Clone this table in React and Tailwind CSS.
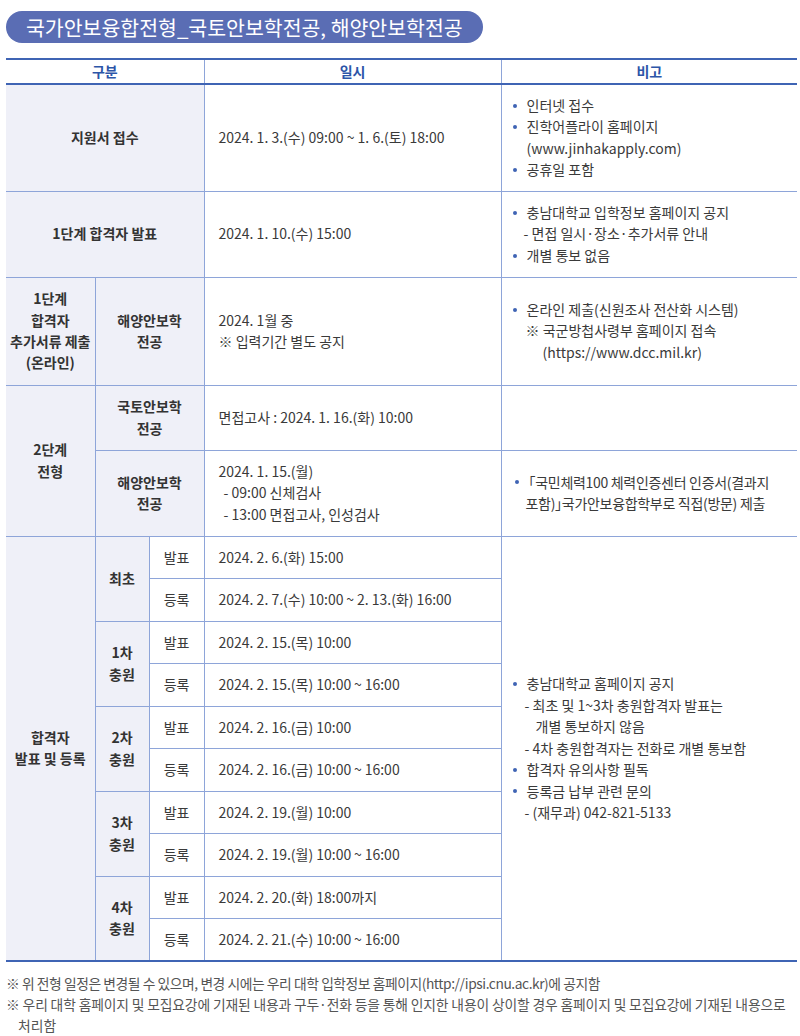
import React from "react";

const B = "border border-[#8ea5d9]";
const THICK_B = "border-b-2 border-b-[#3f64b4]";
const LABEL = "bg-[#eff0f8] text-center font-bold text-[#333]";

function Bullet({ children }) {
  return (
    <div className="flex">
      <span className="w-[14px] flex-none flex items-center">
        <span className="block w-[4px] h-[4px] rounded-full bg-[#3f64b4]" />
      </span>
      <span>{children}</span>
    </div>
  );
}

const Sub = ({ children, pl = "pl-[10px]" }) => <div className={pl}>{children}</div>;

const rounds = [
  ["최초", "2024. 2. 6.(화) 15:00", "2024. 2. 7.(수) 10:00\u2009~\u20092. 13.(화) 16:00"],
  ["1차\n충원", "2024. 2. 15.(목) 10:00", "2024. 2. 15.(목) 10:00\u2009~\u200916:00"],
  ["2차\n충원", "2024. 2. 16.(금) 10:00", "2024. 2. 16.(금) 10:00\u2009~\u200916:00"],
  ["3차\n충원", "2024. 2. 19.(월) 10:00", "2024. 2. 19.(월) 10:00\u2009~\u200916:00"],
  ["4차\n충원", "2024. 2. 20.(화) 18:00까지", "2024. 2. 21.(수) 10:00\u2009~\u200916:00"],
];

export default function App() {
  return (
    <div className="w-[800px] min-h-[1036px] bg-white pt-[11px] font-['Noto_Sans_CJK_KR','Noto_Sans',sans-serif] text-[#3a3a3a]">
      <div className="ml-[6px] w-[477px] h-[32px] rounded-full bg-[#5a6db4] text-white text-[20.5px] leading-[32px] pl-[20px] whitespace-nowrap">
        국가안보융합전형_국토안보학전공, 해양안보학전공
      </div>

      <table className="mt-[15px] ml-[6px] w-[791px] table-fixed border-collapse text-[14px] leading-[21.5px]">
        <colgroup>
          <col className="w-[89px]" />
          <col className="w-[54px]" />
          <col className="w-[55px]" />
          <col className="w-[297px]" />
          <col className="w-[296px]" />
        </colgroup>
        <thead>
          <tr className="h-[25px]">
            {[
              ["구분", 3, "border-l-0"],
              ["일시", 1, ""],
              ["비고", 1, "border-r-0"],
            ].map(([t, cs, extra]) => (
              <th
                key={t}
                colSpan={cs}
                className={`${B} ${extra} border-t-2 border-b-2 border-t-[#3f64b4] border-b-[#3f64b4] text-[14px] font-bold text-[#2c55a8] p-0`}
              >
                {t}
              </th>
            ))}
          </tr>
        </thead>
        <tbody>
          <tr className="h-[107px]">
            <td colSpan={3} className={`${B} border-l-0 ${LABEL}`}>지원서 접수</td>
            <td className={`${B} pl-[14px]`}>2024. 1. 3.(수) 09:00 ~ 1. 6.(토) 18:00</td>
            <td className={`${B} border-r-0 pl-[11px]`}>
              <Bullet>인터넷 접수</Bullet>
              <Bullet>진학어플라이 홈페이지</Bullet>
              <Sub pl="pl-[14px]">(www.jinhakapply.com)</Sub>
              <Bullet>공휴일 포함</Bullet>
            </td>
          </tr>
          <tr className="h-[86px]">
            <td colSpan={3} className={`${B} border-l-0 ${LABEL}`}>1단계 합격자 발표</td>
            <td className={`${B} pl-[14px]`}>2024. 1. 10.(수) 15:00</td>
            <td className={`${B} border-r-0 pl-[11px]`}>
              <Bullet>충남대학교 입학정보 홈페이지 공지</Bullet>
              <Sub pl="pl-[11px]">- 면접 일시·장소·추가서류 안내</Sub>
              <Bullet>개별 통보 없음</Bullet>
            </td>
          </tr>
          <tr className="h-[108px]">
            <td className={`${B} border-l-0 ${LABEL} leading-[21.3px]`}>
              1단계
              <br />
              합격자
              <br />
              <span className="whitespace-nowrap">추가서류 제출</span>
              <br />
              (온라인)
            </td>
            <td colSpan={2} className={`${B} ${LABEL}`}>
              해양안보학
              <br />
              전공
            </td>
            <td className={`${B} pl-[14px]`}>
              2024. 1월 중
              <br />※ 입력기간 별도 공지
            </td>
            <td className={`${B} border-r-0 pl-[11px]`}>
              <Bullet>온라인 제출(신원조사 전산화 시스템)</Bullet>
              <Sub pl="pl-[13px]">※ 국군방첩사령부 홈페이지 접속</Sub>
              <Sub pl="pl-[30px]">(https://www.dcc.mil.kr)</Sub>
            </td>
          </tr>
          <tr className="h-[65px]">
            <td rowSpan={2} className={`${B} border-l-0 ${LABEL}`}>
              2단계
              <br />
              전형
            </td>
            <td colSpan={2} className={`${B} ${LABEL}`}>
              국토안보학
              <br />
              전공
            </td>
            <td className={`${B} pl-[14px]`}>면접고사 : 2024. 1. 16.(화) 10:00</td>
            <td className={`${B} border-r-0`}></td>
          </tr>
          <tr className="h-[86px]">
            <td colSpan={2} className={`${B} ${LABEL}`}>
              해양안보학
              <br />
              전공
            </td>
            <td className={`${B} pl-[14px]`}>
              2024. 1. 15.(월)
              <br />
              <span className="pl-[5px]">- 09:00 신체검사</span>
              <br />
              <span className="pl-[5px]">- 13:00 면접고사, 인성검사</span>
            </td>
            <td className={`${B} border-r-0 pl-[13px] tracking-[-0.3px]`}>
              <Bullet>｢국민체력100 체력인증센터 인증서(결과지</Bullet>
              <Sub pl="pl-[11px]">포함)｣국가안보융합학부로 직접(방문) 제출</Sub>
            </td>
          </tr>
          {rounds.map(([name, ann, reg], i) => {
            const last = i === rounds.length - 1;
            return (
              <React.Fragment key={i}>
                <tr className="h-[42.5px]">
                  {i === 0 && (
                    <td rowSpan={10} className={`${B} border-l-0 ${LABEL} ${THICK_B}`}>
                      합격자
                      <br />
                      발표 및 등록
                    </td>
                  )}
                  <td rowSpan={2} className={`${B} ${LABEL} whitespace-pre-line ${last ? THICK_B : ""}`}>
                    {name}
                  </td>
                  <td className={`${B} text-center`}>발표</td>
                  <td className={`${B} pl-[14px]`}>{ann}</td>
                  {i === 0 && (
                    <td rowSpan={10} className={`${B} border-r-0 pl-[11px] ${THICK_B}`}>
                      <Bullet>충남대학교 홈페이지 공지</Bullet>
                      <Sub pl="pl-[12px]">- 최초 및 1~3차 충원합격자 발표는</Sub>
                      <Sub pl="pl-[23px]">개별 통보하지 않음</Sub>
                      <Sub pl="pl-[12px]">- 4차 충원합격자는 전화로 개별 통보함</Sub>
                      <Bullet>합격자 유의사항 필독</Bullet>
                      <Bullet>등록금 납부 관련 문의</Bullet>
                      <Sub pl="pl-[12px]">- (재무과) 042-821-5133</Sub>
                    </td>
                  )}
                </tr>
                <tr className="h-[42.5px]">
                  <td className={`${B} text-center ${last ? THICK_B : ""}`}>등록</td>
                  <td className={`${B} pl-[14px] ${last ? THICK_B : ""}`}>{reg}</td>
                </tr>
              </React.Fragment>
            );
          })}
        </tbody>
      </table>

      <div className="mt-[11px] pl-[6px] text-[13.8px] leading-[21px] text-[#555]">
        <div className="whitespace-nowrap tracking-[-0.45px]">
          ※ 위 전형 일정은 변경될 수 있으며, 변경 시에는 우리 대학 입학정보 홈페이지(http://ipsi.cnu.ac.kr)에 공지함
        </div>
        <div className="whitespace-nowrap tracking-[-0.15px]">
          ※ 우리 대학 홈페이지 및 모집요강에 기재된 내용과 구두·전화 등을 통해 인지한 내용이 상이할 경우 홈페이지 및 모집요강에 기재된 내용으로
        </div>
        <div className="pl-[12px]">처리함</div>
      </div>
    </div>
  );
}
